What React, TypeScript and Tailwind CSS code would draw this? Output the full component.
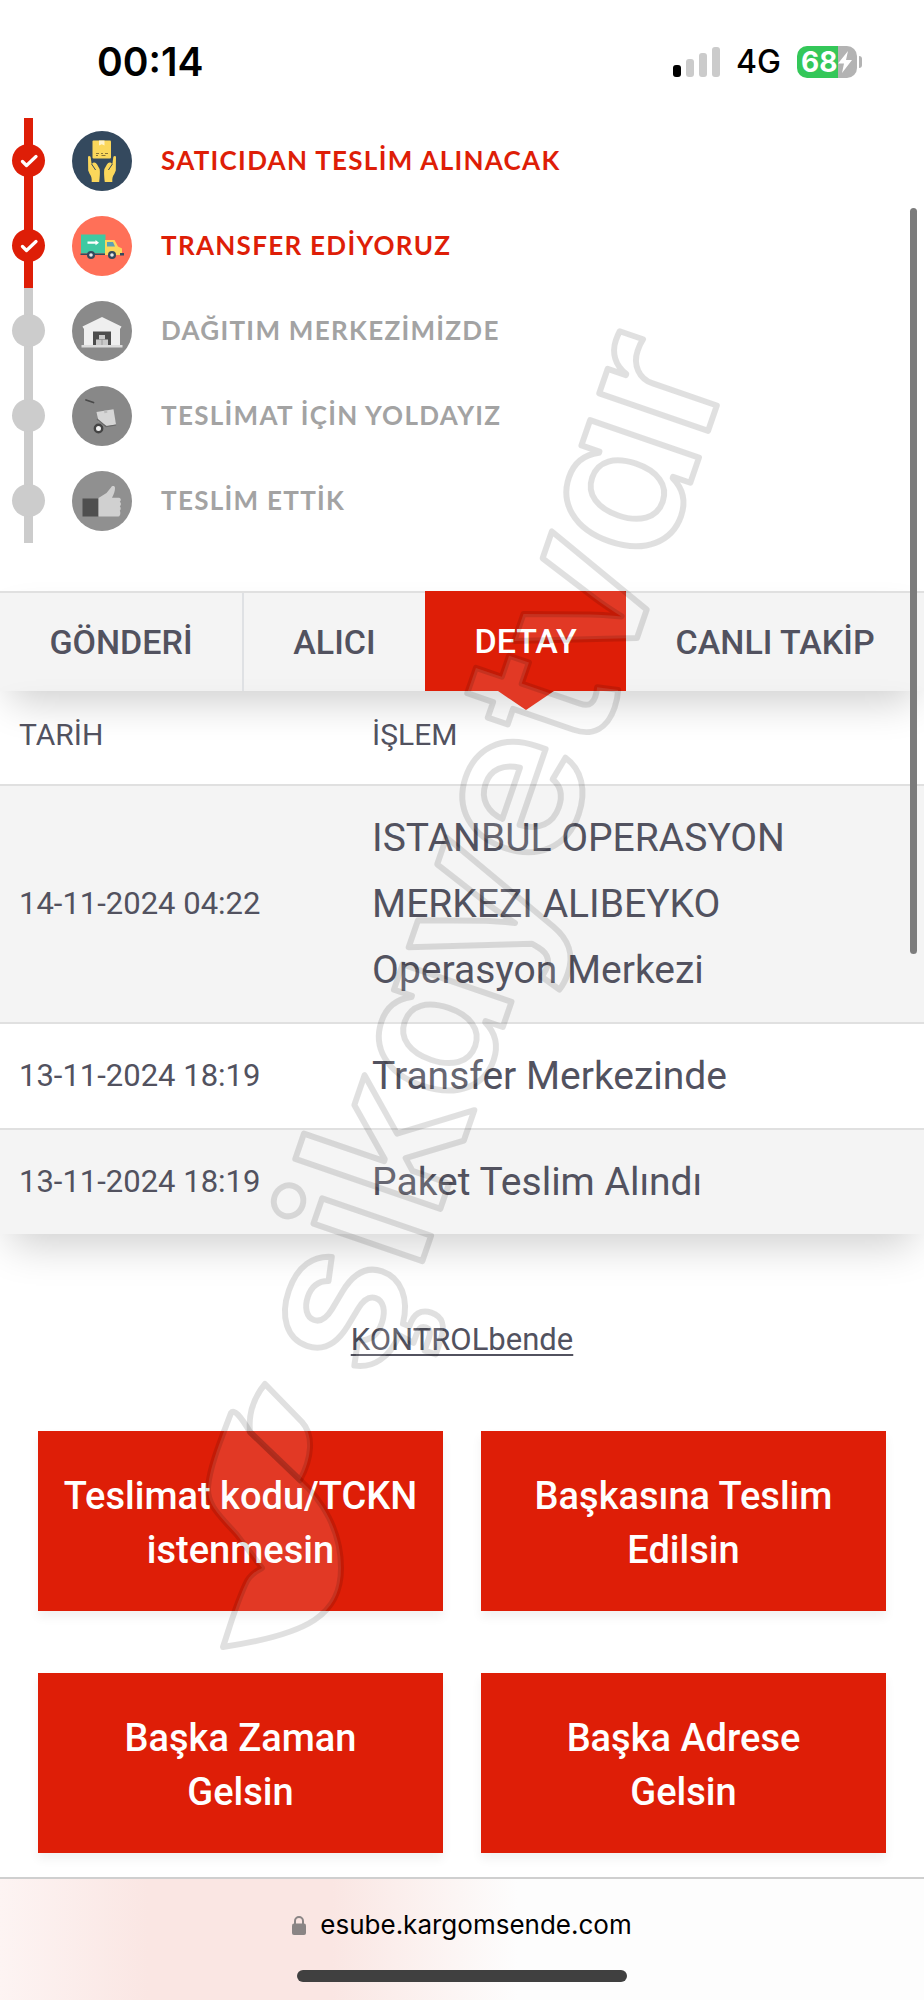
import type { ReactNode } from 'react'

type Step = { label: string; done: boolean; icon: ReactNode }

const steps: Step[] = [
  { label: 'SATICIDAN TESLİM ALINACAK', done: true, icon: <HandsIcon /> },
  { label: 'TRANSFER EDİYORUZ', done: true, icon: <TruckIcon /> },
  { label: 'DAĞITIM MERKEZİMİZDE', done: false, icon: <DepotIcon /> },
  { label: 'TESLİMAT İÇİN YOLDAYIZ', done: false, icon: <TrolleyIcon /> },
  { label: 'TESLİM ETTİK', done: false, icon: <ThumbIcon /> },
]

const tabs = ['GÖNDERİ', 'ALICI', 'DETAY', 'CANLI TAKİP']

const rows = [
  { date: '14-11-2024 04:22', text: 'ISTANBUL OPERASYON MERKEZI ALIBEYKO Operasyon Merkezi' },
  { date: '13-11-2024 18:19', text: 'Transfer Merkezinde' },
  { date: '13-11-2024 18:19', text: 'Paket Teslim Alındı' },
]

const actions = ['Teslimat kodu/TCKN\nistenmesin', 'Başkasına Teslim\nEdilsin', 'Başka Zaman\nGelsin', 'Başka Adrese\nGelsin']

function HandsIcon() {
  return (
    <svg viewBox="0 0 60 60" className="size-[60px]" aria-hidden="true">
      <circle cx="30" cy="30" r="30" fill="#34495e" />
      <rect x="20.5" y="9.5" width="18.5" height="18" rx="1" fill="#fbd75b" />
      <path d="M27 9.500h5.500v5l-2.750-1.300L27 14.500z" fill="#fff3c9" />
      <path d="M24 22.500h3M24 24.500h2M29 22.500h2M33 22.500h3M29.500 24.500h4" stroke="#8a7436" strokeWidth="1" />
      <path d="M16 25.500c1.500-1.200 2.800-.2 2.800 1.500l.8 6 2-1.500c1.500-.4 2.500.5 3.500 2l2.500 4.500c.6 2 .2 8-.4 13h-7.500c.2-4-.5-6-2-8l-1.500-3.500z" fill="#fbd75b" />
      <path d="M44 25.500c-1.500-1.200-2.800-.2-2.800 1.500l-.8 6-2-1.500c-1.500-.4-2.500.5-3.500 2l-2.500 4.500c-.6 2-.2 8 .4 13h7.500c-.2-4 .5-6 2-8l1.500-3.500z" fill="#fbd75b" />
      <path d="M19.600 33l4 6M40.400 33l-4 6" stroke="#34495e" strokeWidth="1" />
    </svg>
  )
}

function TruckIcon() {
  return (
    <svg viewBox="0 0 60 60" className="size-[60px]" aria-hidden="true">
      <circle cx="30" cy="30" r="30" fill="#ff7058" />
      <rect x="9" y="18.500" width="24.500" height="19" fill="#40c9a2" />
      <path d="M15.500 25.500h8v-1.500l3.500 2.700-3.500 2.600v-1.500h-8z" fill="#fff" />
      <path d="M33 24h9.500l3.500 6.500 4 2v6.500H33z" fill="#fbd75b" />
      <path d="M35 26h6l2 4.500h-8z" fill="#5d9fb5" />
      <path d="M8.500 37.500h24.500v1.500H8.500zM48 37h4v2.500h-4z" fill="#34495e" />
      <circle cx="19" cy="39" r="4" fill="#34495e" />
      <circle cx="19" cy="39" r="1.800" fill="#e8e8e8" />
      <circle cx="40" cy="39" r="4" fill="#34495e" />
      <circle cx="40" cy="39" r="1.800" fill="#e8e8e8" />
    </svg>
  )
}

function DepotIcon() {
  return (
    <svg viewBox="0 0 60 60" className="size-[60px]" aria-hidden="true">
      <circle cx="30" cy="30" r="30" fill="#8a8a8a" />
      <path d="M30 16l19.500 9.500-1 2H48V44H12V27.500h-.5l-1-2z" fill="#efefef" />
      <path d="M9.500 44h41v2.500h-41z" fill="#dcdcdc" />
      <path d="M21 30.500h18V44H21z" fill="#4d4d4d" />
      <path d="M27 34h6v4.500h3V44H24v-5.500h3z" fill="#c9c9c9" />
      <path d="M27 38.500h6M30 38.500V44" stroke="#8f8f8f" strokeWidth=".8" />
    </svg>
  )
}

function TrolleyIcon() {
  return (
    <svg viewBox="0 0 60 60" className="size-[60px]" aria-hidden="true">
      <circle cx="30" cy="30" r="30" fill="#888" />
      <path d="M14 14l7.500 2.500" stroke="#4a4a4a" strokeWidth="1.800" strokeLinecap="round" />
      <path d="M24.500 26l17-2.800L44 38.500l-9 1.800-8.500-5z" fill="#d6d6d6" />
      <path d="M32 24.800l3-.5.4 2.500-3 .4z" fill="#bcbcbc" />
      <path d="M25 33l9 7.500 10-1.500" stroke="#6a6a6a" strokeWidth="1.200" fill="none" />
      <circle cx="26.500" cy="42.500" r="3.700" fill="#f2f2f2" stroke="#444" strokeWidth="2.400" />
    </svg>
  )
}

function ThumbIcon() {
  return (
    <svg viewBox="0 0 60 60" className="size-[60px]" aria-hidden="true">
      <circle cx="30" cy="30" r="30" fill="#909090" />
      <path d="M10.500 27.500h16v18h-16z" fill="#4f4f4f" />
      <path d="M26.500 27l8-5 4.500-5.500c1-2 4-2 4 .5 0 3-1 6-3 9.700h7c2 0 2.500 3 .8 4 1.500 1 1.500 3.500 0 4.500 1.200 1 1.200 3.500 0 4.500 1 1.500.7 5.800-1.500 5.800H26.500z" fill="#d0d0d0" />
    </svg>
  )
}

function StatusBar() {
  return (
    <header className="flex h-[118px] items-center justify-between pt-1.5 pr-[62px] pl-[97px] font-[Inter,sans-serif] text-black">
      <time className="text-[39px] font-semibold">00:14</time>
      <div className="flex items-center gap-4">
        <svg viewBox="0 0 47 32" className="h-8 w-[47px]" aria-hidden="true">
          <rect x="0" y="19" width="8" height="12" rx="3" fill="#000" />
          <rect x="13" y="13" width="8" height="18" rx="3" fill="#cbcbcb" />
          <rect x="26" y="7" width="8" height="24" rx="3" fill="#cbcbcb" />
          <rect x="39" y="1" width="8" height="30" rx="3" fill="#cbcbcb" />
        </svg>
        <span className="text-[32px] font-medium">4G</span>
        <div className="flex items-center gap-0.5">
          <div className="flex h-8 w-[60px] items-center rounded-[10px] bg-linear-to-r from-[#34c759] from-68% to-[#b3b3b3] to-68% pl-1 text-white">
            <span className="text-[28px] font-bold">68</span>
            <svg viewBox="0 0 16 22" className="h-[22px] w-4" fill="#fff" aria-hidden="true">
              <path d="M11 0L1 12.500h6L5 22 15 9H9z" />
            </svg>
          </div>
          <span className="h-3 w-[3px] rounded-r-full bg-[#b3b3b3]" />
        </div>
      </div>
    </header>
  )
}

function StepRow({ step }: { step: Step }) {
  return (
    <li className="flex h-[85px] items-center">
      <div className="relative flex h-full w-[57px] items-center justify-center">
        <span className={`h-full w-[9px] ${step.done ? 'bg-[#de1e07]' : 'bg-[#cccccc]'}`} />
        <span className={`absolute flex size-[33px] items-center justify-center rounded-full ${step.done ? 'bg-[#de1e07]' : 'bg-[#cccccc]'}`}>
          {step.done && (
            <svg viewBox="0 0 18 14" className="h-3.5 w-[18px]" fill="none" stroke="#fff" strokeWidth="3.200" strokeLinecap="round" strokeLinejoin="round" aria-hidden="true">
              <path d="M2.500 7.500l4 4L16 2.500" />
            </svg>
          )}
        </span>
      </div>
      <div className="ml-[15px]">{step.icon}</div>
      <span className={`ml-[29px] font-[Lato,sans-serif] text-[26px] font-bold tracking-wider ${step.done ? 'text-[#de1e07]' : 'text-[#a3a3a3]'}`}>{step.label}</span>
    </li>
  )
}

function Tabs({ active }: { active: string }) {
  return (
    <nav className="mt-12 flex h-[100px] border-t-2 border-[#e0e0e0] bg-[#f4f4f4] shadow-[0_20px_40px_-10px_rgba(0,0,0,0.2)]">
      {tabs.map(t => (
        <button
          key={t}
          className={
            t === active
              ? 'relative -mt-0.5 grow bg-[#de1e07] px-6 text-[34px] font-medium text-white'
              : 'grow border-[#dfe1e4] px-6 text-[34px] font-medium text-[#52525f] first:border-r-2'
          }
        >
          {t}
          {t === active && (
            <svg viewBox="0 0 56 19" className="absolute top-full left-1/2 h-[19px] w-14 -translate-x-1/2" fill="#de1e07" aria-hidden="true">
              <path d="M0 0h56L28 19z" />
            </svg>
          )}
        </button>
      ))}
    </nav>
  )
}

function Watermark() {
  return (
    <svg viewBox="0 0 924 2000" className="pointer-events-none absolute top-0 left-0 w-full" fill="#fff" fillOpacity=".12" stroke="#000" strokeOpacity=".12" strokeWidth="6" strokeLinejoin="round" aria-hidden="true">
      <text transform="translate(380 1384) rotate(-71)" fontFamily="Inter, sans-serif" fontSize="211" fontWeight="600" style={{ fontFeatureSettings: '"cv11"' }}>şikayetvar</text>
      <path d="M231 1413c3-4 9 2 19 19l50 48c22 20 41 50 41 88 0 46-31 66-118 79 8-24 14-46 24-66 4-7 9-10 15-13l-25-33c-18-20-30-30-29-48 2-22 14-50 23-74z" />
      <path d="M265 1384l37 38c12 13 10 36-2 58l-50-48c-2-20 5-36 15-48z" />
    </svg>
  )
}

export default function App() {
  return (
    <div className="relative overflow-hidden bg-white font-[Roboto,sans-serif] text-[#52525f]">
      <StatusBar />

      <ol>
        {steps.map(s => <StepRow key={s.label} step={s} />)}
      </ol>

      <Tabs active="DETAY" />

      <table className="w-full text-left shadow-[0_20px_40px_-10px_rgba(0,0,0,0.2)]">
        <thead>
          <tr className="h-[94px] text-[30px]">
            <th className="w-[38%] px-[19px] pb-1.5 font-normal">TARİH</th>
            <th className="px-[21px] pb-1.5 font-normal">İŞLEM</th>
          </tr>
        </thead>
        <tbody>
          {rows.map((r, i) => (
            <tr key={i} className="border-t-2 border-[#e0e0e0] odd:bg-[#f4f4f4]">
              <td className="px-[19px] text-[31px]">{r.date}</td>
              <td className="py-[19px] pr-28 pl-[21px] text-[39px] leading-[66px]">{r.text}</td>
            </tr>
          ))}
        </tbody>
      </table>

      <div className="mt-[82px] text-center">
        <a href="#kontrolbende" className="text-[31px] leading-[48px] underline decoration-2 underline-offset-4">KONTROLbende</a>
      </div>

      <div className="mt-[67px] grid grid-cols-2 gap-x-[38px] gap-y-[62px] px-[38px] pb-6">
        {actions.map(a => (
          <button key={a} className="bg-[#de1e07] px-5 pt-[38px] pb-[34px] text-[38px] leading-[54px] font-medium whitespace-pre-line text-white shadow-[0_6px_10px_rgba(0,0,0,0.06)]">
            {a}
          </button>
        ))}
      </div>

      <footer className="flex h-[124px] flex-col items-center border-t-2 border-[#cfcfcf] bg-[linear-gradient(to_right,#fdf4f3,#fae6e3_16%,#fae6e3_36%,#fdfdfd_56%)] pt-7">
        <div className="flex items-center gap-3.5 font-[Inter,sans-serif] text-[26px] leading-9 text-black">
          <svg viewBox="0 0 14 20" className="h-5 w-3.5" aria-hidden="true">
            <path d="M3 10V6a4 4 0 018 0v4" fill="none" stroke="#8a8585" strokeWidth="2" />
            <rect y="8.500" width="14" height="11.500" rx="2" fill="#8a8585" />
          </svg>
          esube.kargomsende.com
        </div>
        <div className="mt-[27px] h-3 w-[330px] rounded-full bg-[#404040]" />
      </footer>

      <div className="absolute top-[208px] right-[7px] h-[746px] w-[7px] rounded-full bg-[#7c7c7c]" />
      <Watermark />
    </div>
  )
}
